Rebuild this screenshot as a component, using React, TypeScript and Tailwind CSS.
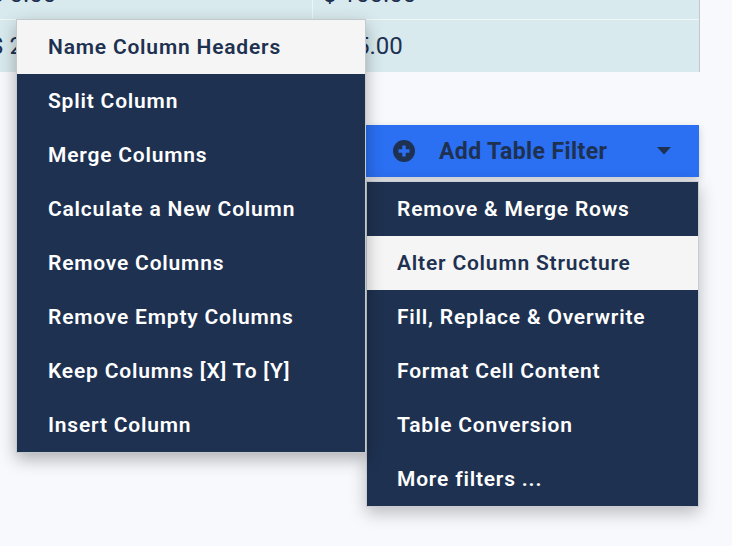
import React from "react";

const columnItems = [
  "Name Column Headers",
  "Split Column",
  "Merge Columns",
  "Calculate a New Column",
  "Remove Columns",
  "Remove Empty Columns",
  "Keep Columns [X] To [Y]",
  "Insert Column",
];

const filterItems = [
  "Remove & Merge Rows",
  "Alter Column Structure",
  "Fill, Replace & Overwrite",
  "Format Cell Content",
  "Table Conversion",
  "More filters ...",
];

function PlusCircle() {
  return (
    <svg width="22" height="22" viewBox="0 0 22 22">
      <circle cx="11" cy="11" r="11" fill="#1e3150" />
      <path d="M11 5.5v11M5.5 11h11" stroke="#2b6ff2" strokeWidth="3.4" />
    </svg>
  );
}

function Caret() {
  return (
    <svg width="14" height="8" viewBox="0 0 14 8">
      <path d="M0 0h14L7 7.5z" fill="#1e3150" />
    </svg>
  );
}

function MenuItem({ label, active, pad }: { label: string; active?: boolean; pad: string }) {
  return (
    <div
      className={
        (active
          ? "h-[54px] pt-[2px] flex items-center bg-[#f5f5f5] text-[#1e3150] "
          : "h-[54px] pt-[2px] flex items-center text-white ") + pad
      }
    >
      {label}
    </div>
  );
}

export default function App() {
  return (
    <div
      className="relative w-[732px] h-[546px] overflow-hidden bg-[#f8f9fd]"
      style={{ fontFamily: "Roboto, 'Noto Sans', sans-serif" }}
    >
      {/* table behind the menus */}
      <div className="w-[700px] h-[72px] overflow-hidden border-r border-[#c3c8cb]">
        <div className="-mt-[31px] -ml-[20px] text-[24px] text-[#1e3150]">
          <div className="flex h-[51px] bg-[#d9eaee] border-b border-[#f1f6f8]">
            <div className="w-[333px] flex items-center pl-[10px] border-r border-[#eef5f7]">
              $ 0.00
            </div>
            <div className="flex-1 flex items-center pl-[10px]">$ 100.00</div>
          </div>
          <div className="flex h-[52px] bg-[#d9eaee]">
            <div className="w-[333px] flex items-center pl-[10px]">$ 250.00</div>
            <div className="flex-1 flex items-center pl-[10px]">$ 25.00</div>
          </div>
        </div>
      </div>

      {/* filter button + menu */}
      <div className="ml-[366px] mt-[53px] w-[333px]">
        <div className="h-[52px] pt-[3px] flex items-center bg-[#2b6ff2] shadow-[0_3px_8px_rgba(0,0,0,0.18)] pl-[27px] pr-[28px]">
          <span className="-mt-[3px] flex">
            <PlusCircle />
          </span>
          <span className="ml-[24px] text-[23px] font-bold tracking-[0.4px] text-[#1e3150]">
            Add Table Filter
          </span>
          <span className="ml-auto -mt-[3px] flex">
            <Caret />
          </span>
        </div>
        <div className="mt-[4px] bg-[#1e3150] border border-[#c9ccd0] shadow-[0_6px_16px_rgba(0,0,0,0.25)] text-[21px] font-semibold tracking-[0.8px]">
          {filterItems.map((item, i) => (
            <MenuItem key={item} label={item} active={i === 1} pad="pl-[30px]" />
          ))}
        </div>
      </div>

      {/* submenu overlay */}
      <div className="absolute left-[16px] top-[19px] w-[350px] bg-[#1e3150] border border-[#c3cacd] shadow-[0_6px_16px_rgba(0,0,0,0.3)] text-[21px] font-semibold tracking-[0.8px] z-10">
        {columnItems.map((item, i) => (
          <MenuItem key={item} label={item} active={i === 0} pad="pl-[31px]" />
        ))}
      </div>
    </div>
  );
}
